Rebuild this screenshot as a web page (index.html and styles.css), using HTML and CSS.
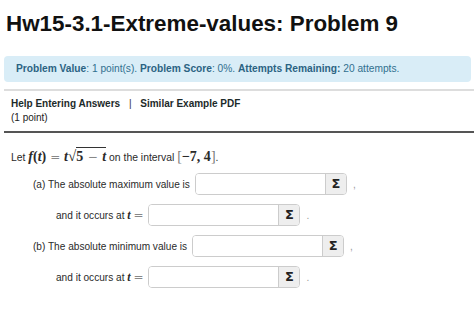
FILE: index.html
```html
<!DOCTYPE html>
<html lang="en">
<head>
    <meta charset="UTF-8">
    <title>Hw15-3.1-Extreme-values: Problem 9</title>
    <link rel="stylesheet" href="styles.css">
</head>
<body>
<h1 class="title">Hw15-3.1-Extreme-values: Problem 9</h1>
<div class="info">
    <b>Problem Value</b>: 1 point(s). <b>Problem Score</b>: 0%. <b>Attempts Remaining:</b> 20 attempts.
</div>
<div class="problem">
    <div class="links"><a>Help Entering Answers</a> <span class="sep">|</span> <a>Similar Example PDF</a></div>
    <div class="points">(1 point)</div>
</div>
<div class="body">
    <p class="intro">Let <span class="m"><i>f</i>(<i>t</i>)</span> <span class="eq">=</span> <span class="m"><i>t</i><span class="rad">&radic;</span><span class="under">5 <span class="minus">&minus;</span> <i>t</i></span></span> on the interval <span class="m"><span class="br">[</span>&minus;7, 4<span class="br">]</span></span>.</p>

    <div class="row part">
        <span>(a) The absolute maximum value is</span>
        <span class="ans"><span class="field"></span><span class="sigma">&Sigma;</span></span>
        <span class="punct">,</span>
    </div>
    <div class="row sub">
        <span>and it occurs at <i class="tv">t</i> <span class="eq">=</span></span>
        <span class="ans"><span class="field"></span><span class="sigma">&Sigma;</span></span>
        <span class="punct">.</span>
    </div>
    <div class="row part">
        <span>(b) The absolute minimum value is</span>
        <span class="ans"><span class="field"></span><span class="sigma">&Sigma;</span></span>
        <span class="punct">,</span>
    </div>
    <div class="row sub">
        <span>and it occurs at <i class="tv">t</i> <span class="eq">=</span></span>
        <span class="ans"><span class="field"></span><span class="sigma">&Sigma;</span></span>
        <span class="punct">.</span>
    </div>
</div>
</body>
</html>
```

FILE: styles.css
```css
*{
    margin: 0px;
    padding: 0px;
    box-sizing: border-box;
}
body{
    font-family: "Liberation Sans", Arial, sans-serif;
    color: #222;
    background: #fff;
    width: 474px;
    overflow: hidden;
}
.title{
    font-size: 22.4px;
    font-weight: bold;
    color: #111;
    padding: 12px 0px 0px 6px;
    line-height: 24px;
    height: 50px;
}
.info{
    margin: 6px 3px 0px 4px;
    height: 26px;
    line-height: 26px;
    padding-left: 12px;
    background: #d9edf7;
    border-radius: 4px;
    color: #31708f;
    font-size: 10.2px;
}
.info b{
    color: #2b6383;
}
.problem{
    margin: 7px 0px 0px 4px;
    border-top: 2px solid #ddd;
    border-bottom: 2px solid #555;
    padding: 6px 0px 6px 7px;
    font-size: 10px;
    line-height: 14px;
}
.links a{
    font-weight: bold;
    color: #1c2a2a;
}
.links .sep{
    padding: 0px 6px;
    color: #333;
}
.body{
    padding-left: 11px;
    font-size: 10.1px;
    color: #2a2a2a;
}
.intro{
    margin-top: 15px;
    line-height: 16px;
    font-size: 10.4px;
}
.m{
    font-family: "Liberation Serif", "DejaVu Serif", serif;
    font-size: 14px;
    font-weight: bold;
}
.m i{
    font-style: italic;
}
.rad{
    font-weight: normal;
    font-size: 15px;
}
.under{
    border-top: 1px solid #333;
    padding-top: 1px;
}
.minus, .eq{
    color: #888;
    font-weight: normal;
    font-family: "DejaVu Sans", sans-serif;
    font-size: 12px;
    padding: 0px 1px;
}
.row .eq{
    padding: 0px;
}
.br{
    font-weight: normal;
    color: #777;
}
.row{
    display: flex;
    align-items: center;
    height: 22px;
}
.part{
    margin-top: 7px;
    padding-left: 22px;
}
.sub{
    margin-top: 9px;
    padding-left: 45px;
}
.part + .sub + .part{
    margin-top: 9px;
}
.tv{
    font-family: "Liberation Serif", serif;
    font-weight: bold;
    font-size: 12px;
}
.ans{
    display: flex;
    width: 152px;
    height: 22px;
    border: 1px solid #ccc;
    border-radius: 4px;
    margin-left: 5px;
    overflow: hidden;
}
.field{
    flex: 1;
    background: #fff;
}
.sigma{
    width: 21px;
    border-left: 1px solid #ccc;
    background: #eee;
    text-align: center;
    font-family: "DejaVu Sans", sans-serif;
    font-weight: bold;
    font-size: 13px;
    line-height: 20px;
    color: #222;
}
.punct{
    margin-left: 6px;
    color: #999;
}
```
